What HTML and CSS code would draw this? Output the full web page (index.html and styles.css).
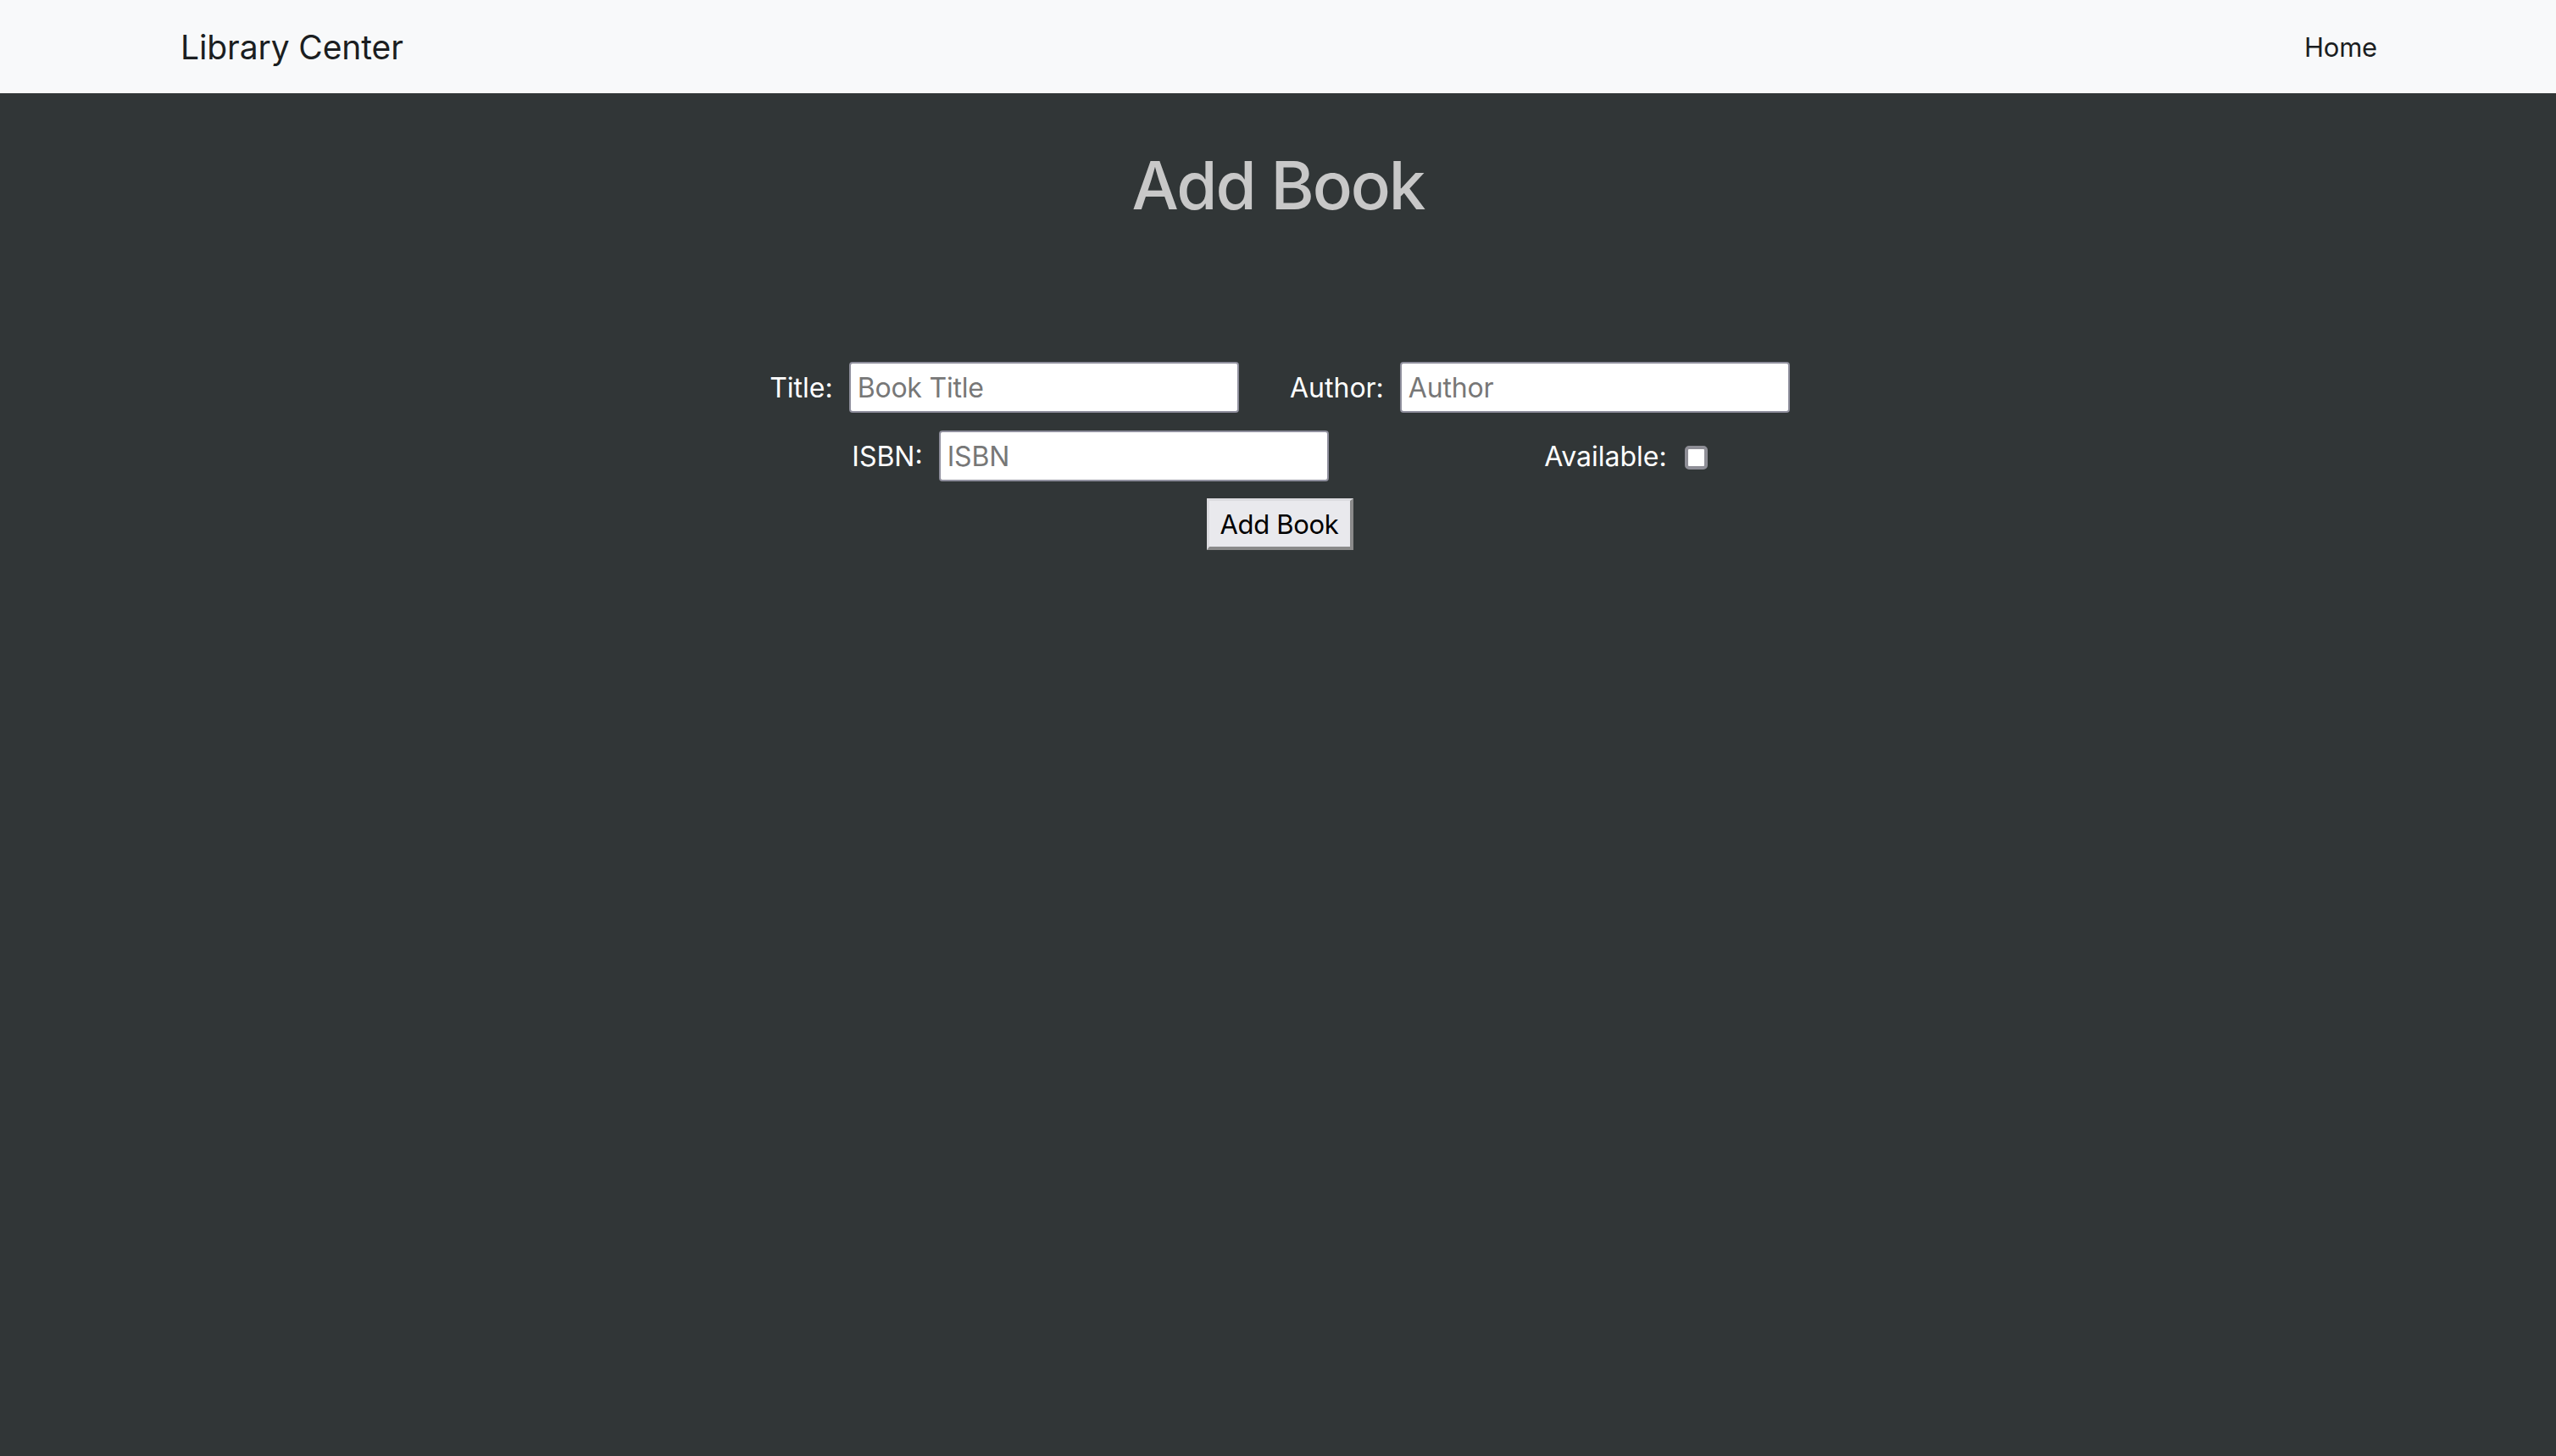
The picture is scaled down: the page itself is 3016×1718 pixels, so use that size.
FILE: index.html
```html
<!DOCTYPE html>
<html lang="en">
<head>
<meta charset="utf-8">
<title>Library Center</title>
<link rel="stylesheet" href="styles.css">
</head>
<body>
<nav class="navbar">
  <div class="nav-inner">
    <a class="brand" href="#">Library Center</a>
    <a class="nav-link" href="#">Home</a>
  </div>
</nav>
<main class="page">
  <h1 class="page-title">Add Book</h1>
  <form class="book-form">
    <div class="form-row">
      <div class="field">
        <label class="field-label" for="title">Title:</label>
        <input class="text-input" id="title" type="text" placeholder="Book Title">
      </div>
      <div class="field">
        <label class="field-label" for="author">Author:</label>
        <input class="text-input" id="author" type="text" placeholder="Author">
      </div>
    </div>
    <div class="form-row">
      <div class="field">
        <label class="field-label" for="isbn">ISBN:</label>
        <input class="text-input" id="isbn" type="text" placeholder="ISBN">
      </div>
      <div class="field">
        <label class="field-label" for="available">Available:</label>
        <span class="checkbox" id="available"></span>
      </div>
    </div>
    <div class="form-row form-actions">
      <button class="submit-btn" type="button">Add Book</button>
    </div>
  </form>
</main>
</body>
</html>
```
FILE: styles.css
```css
html, body {
  margin: 0;
  padding: 0;
}
body {
  background: #313637;
  font-family: Inter, "Noto Sans", sans-serif;
  min-height: 1718px;
}
.navbar {
  background: #f8f9fa;
  height: 110px;
}
.nav-inner {
  height: 110px;
  display: flex;
  align-items: center;
  justify-content: space-between;
  padding: 0 211px 0 213px;
}
.brand {
  font-size: 39px;
  color: #1b1e21;
  text-decoration: none;
  letter-spacing: -0.1px;
}
.nav-link {
  font-size: 31px;
  color: #1b1e21;
  text-decoration: none;
  letter-spacing: -0.2px;
}
.page {
  display: flex;
  flex-direction: column;
  align-items: center;
}
.page-title {
  margin: 61px 0 0;
  font-size: 78px;
  line-height: 96px;
  font-weight: 500;
  color: #c8c8c8;
  letter-spacing: -2px;
}
.book-form {
  width: 1264px;
  margin-top: 160px;
  padding-left: 4px;
  display: flex;
  flex-direction: column;
  gap: 21px;
}
.form-row {
  display: flex;
  justify-content: space-around;
  align-items: center;
}
.form-actions {
  justify-content: center;
}
.field {
  display: flex;
  align-items: center;
  gap: 19px;
}
.field-label {
  font-size: 32px;
  color: #ffffff;
  letter-spacing: 0;
}
.text-input {
  box-sizing: border-box;
  width: 460px;
  height: 60px;
  margin: 0;
  padding: 0 8px;
  border: 2px solid #8f8f9d;
  border-radius: 4px;
  background: #fff;
  font-family: Inter, "Noto Sans", sans-serif;
  font-size: 32px;
  color: #111;
  outline: none;
}
.text-input::placeholder {
  color: #777777;
  letter-spacing: -0.2px;
}
.checkbox {
  box-sizing: border-box;
  display: inline-block;
  width: 27px;
  height: 28px;
  margin-top: 3px;
  margin-left: 2px;
  border: 4px solid #8e8e96;
  border-radius: 5px;
  background: #fff;
}
.submit-btn {
  box-sizing: border-box;
  width: 173px;
  height: 61px;
  margin-top: -1px;
  padding: 0;
  background: #e9e9ed;
  border-style: solid;
  border-width: 3px 4px 4px 3px;
  border-color: #dcdce0 #8a8a8a #8a8a8a #dcdce0;
  font-family: Inter, "Noto Sans", sans-serif;
  font-size: 31px;
  color: #000;
  letter-spacing: -0.3px;
}
```
